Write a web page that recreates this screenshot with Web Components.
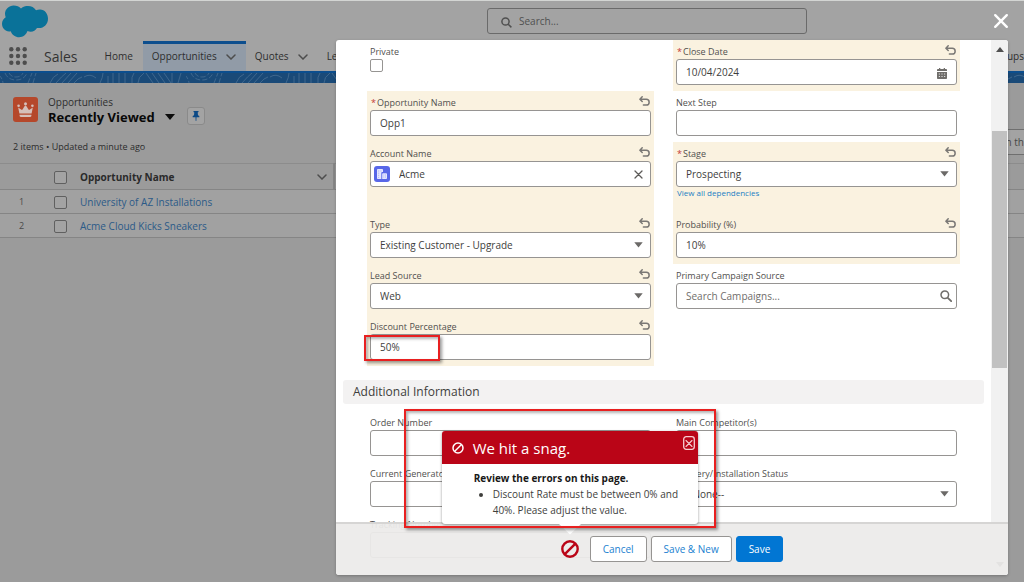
<!DOCTYPE html>
<html lang="en">
<head>
<meta charset="utf-8">
<title>Opportunities | Salesforce</title>
<style>
html, body { margin: 0; }
body { font: 10px/14px "Open Sans", "Noto Sans", sans-serif; color: #3e3e3c; background: #9b9b9b; overflow: hidden; }
</style>
</head>
<body>
<crm-app>
  <crm-header></crm-header>
  <crm-nav></crm-nav>
  <crm-list></crm-list>
  <crm-modal slot="overlay">
    <crm-column slot="main">
      <crm-field label="Private" kind="checkbox"></crm-field>
      <crm-field label="Opportunity Name" value="Opp1" required changed></crm-field>
      <crm-field label="Account Name" value="Acme" kind="lookup" changed tall></crm-field>
      <crm-field label="Type" value="Existing Customer - Upgrade" kind="select" changed></crm-field>
      <crm-field label="Lead Source" value="Web" kind="select" changed></crm-field>
      <crm-field label="Discount Percentage" value="50%" changed marked></crm-field>
    </crm-column>
    <crm-column slot="main">
      <crm-field label="Close Date" value="10/04/2024" kind="date" required changed></crm-field>
      <crm-field label="Next Step"></crm-field>
      <crm-field label="Stage" value="Prospecting" kind="select" required changed tall><a slot="help" href="#dependencies">View all dependencies</a></crm-field>
      <crm-field label="Probability (%)" value="10%" changed></crm-field>
      <crm-field label="Primary Campaign Source" placeholder="Search Campaigns..." kind="search"></crm-field>
    </crm-column>
    <crm-column slot="extra">
      <crm-field label="Order Number"></crm-field>
      <crm-field label="Current Generator(s)"></crm-field>
      <crm-field label="Tracking Number"></crm-field>
    </crm-column>
    <crm-column slot="extra">
      <crm-field label="Main Competitor(s)"></crm-field>
      <crm-field label="Delivery/Installation Status" value="--None--" kind="select"></crm-field>
    </crm-column>
    <crm-error slot="error" heading="We hit a snag.">
      <strong slot="title">Review the errors on this page.</strong>
      <li>Discount Rate must be between 0% and 40%. Please adjust the value.</li>
    </crm-error>
  </crm-modal>
</crm-app>

<script>
const define = (name, html, setup) => {
  const tpl = document.createElement('template');
  tpl.innerHTML = '<style>:host,*{box-sizing:border-box}button,input,select{font:inherit;color:inherit}svg{display:block;flex:none}</style>' + html;
  customElements.define(name, class extends HTMLElement {
    constructor() {
      super();
      this.attachShadow({ mode: 'open' }).append(tpl.content.cloneNode(true));
      if (setup) setup(this, this.shadowRoot);
    }
  });
};

define('crm-app', `
<style>
:host { display: grid; min-height: 100vh; }
.page, .overlay { grid-area: 1 / 1; min-width: 0; }
.page { overflow: hidden; }
.overlay { display: grid; grid-template-columns: 336px minmax(0, 1fr); padding: 40px 16px 7px 0; position: relative; }
::slotted(crm-modal) { grid-column: 2; }
.close { position: absolute; top: 13px; right: 15px; padding: 0; border: 0; background: none; }
</style>
<div class="page"><slot></slot></div>
<div class="overlay">
  <slot name="overlay"></slot>
  <button class="close" aria-label="Close"><svg width="16" height="16" viewBox="0 0 16 16" stroke="#fff" stroke-width="2.4" stroke-linecap="round"><path d="M2.200 2.200l11.600 11.600M13.800 2.200L2.200 13.800"/></svg></button>
</div>`);

define('crm-header', `
<style>
:host { display: flex; align-items: flex-start; height: 41px; background: #a3a3a3; border-top: 1px solid #d3d5d3; padding: 4px 0 0 2px; }
.search { display: flex; align-items: center; gap: 7px; width: 320px; height: 26px; margin: 3px 0 0 439px; padding: 0 13px; border: 1px solid #6a6a6a; border-radius: 3px; color: #505050; }
input { flex: 1; min-width: 0; border: 0; padding: 0; background: none; outline: 0; }
input::placeholder { color: #505050; opacity: 1; }
.search svg { margin-top: 2px; }
</style>
<svg width="46" height="33" viewBox="0 0 46 33" fill="#0a7299"><path d="M19 3.500C21 1.600 23.500 1 26 1c3.500 0 6.200 1.600 8 4.200C35.200 4.700 36.500 4.500 38 4.500c4.800 0 8 4.300 8 9.200 0 5.300-4 9.400-9 9.400-.7 0-1.300-.1-2-.2-1.400 2.400-3.600 3.800-6.300 3.800-1.200 0-2.200-.2-3.200-.7C24.200 29.500 21.200 32.200 17.200 32.200c-4 0-7.200-2.500-8.500-6-.5.100-1 .2-1.600.2C3 26.400 0 22.900 0 18.800c0-2.800 1.500-5.200 3.700-6.600C3.300 11.200 3 10 3 8.800 3 4 7 .4 11.600.4 14.700.4 17.400 1.400 19 3.500z"/></svg>
<label class="search"><svg width="11" height="11" viewBox="0 0 11 11" fill="none" stroke="#505050" stroke-width="1.500"><circle cx="4.500" cy="4.500" r="3.600"/><path d="M7.200 7.200L10.400 10.400"/></svg><input type="search" placeholder="Search..." aria-label="Search"></label>`);

define('crm-nav', `
<style>
:host { display: block; background: #a3a3a3; font-size: 10px; color: #2e2e2e; }
nav { display: flex; height: 32px; border-bottom: 2px solid #0c4e8e; white-space: nowrap; }
.apps { border: 0; background: none; padding: 6px 0 0 9px; display: block; align-self: flex-start; }
.name { font-size: 14px; line-height: 32px; margin: 0 18px 0 17px; color: #333; }
a { display: flex; align-items: center; gap: 9px; padding: 0 10px 4px 9px; color: inherit; text-decoration: none; border-top: 3px solid transparent; }
a svg { margin-top: 3px; }
a.on { border-top-color: #0c4e8e; background: #919ba7; }
a.last { margin-left: auto; padding-right: 0; }
.band { display: block; width: 100%; height: 10px; background: #1a4a78; }
</style>
<nav>
  <button class="apps" aria-label="App Launcher"><svg width="18" height="18" viewBox="0 0 18 18" fill="#4d4d4d"><circle cx="2.300" cy="2.300" r="2.200"/><circle cx="9" cy="2.300" r="2.200"/><circle cx="15.700" cy="2.300" r="2.200"/><circle cx="2.300" cy="9" r="2.200"/><circle cx="9" cy="9" r="2.200"/><circle cx="15.700" cy="9" r="2.200"/><circle cx="2.300" cy="15.700" r="2.200"/><circle cx="9" cy="15.700" r="2.200"/><circle cx="15.700" cy="15.700" r="2.200"/></svg></button>
  <span class="name">Sales</span>
  <a href="#home">Home</a>
  <a href="#opportunities" class="on">Opportunities<svg width="10" height="6" viewBox="0 0 10 6" fill="none" stroke="#4d4d4d" stroke-width="1.500" stroke-linecap="round"><path d="M1 1l4 4 4-4"/></svg></a>
  <a href="#quotes">Quotes<svg width="10" height="6" viewBox="0 0 10 6" fill="none" stroke="#4d4d4d" stroke-width="1.500" stroke-linecap="round"><path d="M1 1l4 4 4-4"/></svg></a>
  <a href="#leads">Leads</a>
  <a href="#groups" class="last">Groups</a>
</nav>
<svg class="band" aria-hidden="true"><defs><pattern id="t" width="186" height="10" patternUnits="userSpaceOnUse"><g fill="none" stroke="#3d668d" stroke-width="1"><path d="M-1 2q4 4 4 9M5 0q3 7 11 7t11-7M9 0q2 4 7 4t7-4M28 10l4-10M33 10l3-10" stroke-dasharray="5 2"/><path d="M50 10q3-7 8-9M56 10q6-7 10-10M62 10l9-10M68 10l9-10M74 10q4-5 8-6M84 4q6-4 12 1M100 10q3-6 3-10M108 10V3M113 10V0M119 10V0M125 10V0M132 10q-1-6 2-10M138 10q0-6 6-10M146 0l7 10M152 0l7 10M158 0l7 10M164 0l7 10M172 10V0M178 10l3-10"/></g></pattern></defs><rect width="100%" height="10" fill="url(#t)"/></svg>`);

define('crm-list', `
<style>
:host { display: block; background: #9b9b9b; }
header { display: grid; grid-template-columns: 25px auto auto minmax(0, 1fr); align-items: center; column-gap: 10px; padding: 12px 0 0 13px; }
.icon { width: 25px; height: 25px; border-radius: 3px; background: #b5482b; display: grid; place-items: center; align-self: start; margin-top: 2px; }
small { display: block; font-size: 10px; line-height: 14px; color: #2e2e2e; }
h1 { display: flex; align-items: center; gap: 10px; margin: 0; font-size: 13px; line-height: 16px; color: #080808; }
.pin { width: 18px; height: 18px; margin: 12px 0 0 2px; padding: 0; display: grid; place-items: center; border: 1px solid #8a8a8a; border-radius: 3px; background: #a3a3a3; }
.bar { display: flex; justify-content: space-between; height: 38px; padding-left: 13px; }
p { margin: 15px 0 0; font-size: 9px; line-height: 14px; color: #2b2b2b; }
.find { width: 120px; height: 26px; margin: 4px -56px 0 0; padding: 0 0 0 19px; border: 1px solid #6f6f6f; border-radius: 3px; background: #a3a3a3; }
.find::placeholder { color: #484848; opacity: 1; }
table { width: 100%; border-collapse: collapse; table-layout: fixed; border-top: 1px solid #8c8c8c; text-align: left; }
th, td { height: 24px; padding: 0; border-bottom: 1px solid #858585; background: #a1a1a1; }
th { height: 26px; background: #9b9b9b; font-size: 10px; color: #2a2a2a; }
td:first-child { text-align: center; font-size: 9px; color: #4a4a4a; padding-left: 2px; }
.n { width: 41px; } .c { width: 39px; } .o { width: 254px; }
th.name { border-right: 2px solid #868686; }
th.name div { display: flex; justify-content: space-between; align-items: center; padding-right: 6px; }
input[type=checkbox] { appearance: none; display: block; width: 13px; height: 13px; margin: 1px 0 0 13px; border: 1px solid #606060; border-radius: 2px; background: #a3a3a3; }
td a { color: #2b5a88; text-decoration: none; }
</style>
<header>
  <span class="icon"><svg width="17" height="16" viewBox="0 0 17 16" fill="#d5c0ba"><circle cx="1.600" cy="3.800" r="1.300"/><circle cx="8.500" cy="1.700" r="1.500"/><circle cx="15.400" cy="3.800" r="1.300"/><path d="M1.200 5.500l3.300 2.300c.4.200.8.100 1-.3L8 3.500h1l2.500 4c.2.400.6.500 1 .3l3.300-2.300-1.200 6H2.400zM2.600 12.800h11.800v1c0 .7-.5 1.200-1.200 1.200H3.800c-.7 0-1.200-.5-1.200-1.200z"/></svg></span>
  <div><small>Opportunities</small><h1>Recently Viewed<svg width="10" height="6" viewBox="0 0 10 6"><path d="M0 0h10L5 6z" fill="#0c0c0c"/></svg></h1></div>
  <button class="pin" aria-label="Pin this list"><svg width="8" height="10" viewBox="0 0 8 10" fill="#0d4a86"><path d="M1.500 0h5v1l-.8.500.3 2.800L7.300 5v1.200H4.500L4.300 10h-.6L3.500 6.200H.7V5L2 4.300l.3-2.800-.8-.5z"/></svg></button>
</header>
<div class="bar"><p>2 items • Updated a minute ago</p><input class="find" type="search" placeholder="Search this list..." aria-label="Search this list"></div>
<table>
  <colgroup><col class="n"><col class="c"><col class="o"><col></colgroup>
  <thead><tr><th></th><th><input type="checkbox" aria-label="Select all"></th><th class="name"><div>Opportunity Name<svg width="10" height="6" viewBox="0 0 10 6" fill="none" stroke="#4d4d4d" stroke-width="1.500" stroke-linecap="round"><path d="M1 1l4 4 4-4"/></svg></div></th><th></th></tr></thead>
  <tbody>
    <tr><td>1</td><td><input type="checkbox" aria-label="Select row 1"></td><td><a href="#r1">University of AZ Installations</a></td><td></td></tr>
    <tr><td>2</td><td><input type="checkbox" aria-label="Select row 2"></td><td><a href="#r2">Acme Cloud Kicks Sneakers</a></td><td></td></tr>
  </tbody>
</table>`);

define('crm-column', `
<style>:host { display: flex; flex-direction: column; min-width: 0; }</style><slot></slot>`);

const CARET = '<svg width="9" height="6" viewBox="0 0 9 6"><path d="M.3.3h8.400L4.500 5.600z" fill="#6b6967"/></svg>';
const ICONS = {
  select: CARET,
  lookup: '<svg width="9" height="9" viewBox="0 0 9 9" stroke="#5c5a58" stroke-width="1.300" stroke-linecap="round"><path d="M1 1l7 7M8 1L1 8"/></svg>',
  date: '<svg width="10" height="11" viewBox="0 0 10 11"><path d="M2 0h1.300v1h3.400V0H8v1h1.200c.4 0 .8.300.8.800V3H0V1.800C0 1.300.4 1 .8 1H2zM0 4h10v6.200c0 .4-.3.800-.8.800H.8c-.5 0-.8-.4-.8-.8z" fill="#706e6b"/><path d="M1.800 5.500h1.200v1H1.800zM4.400 5.500h1.200v1H4.400zM7 5.500h1.200v1H7zM1.800 8h1.200v1H1.800zM4.400 8h1.200v1H4.400zM7 8h1.200v1H7z" fill="#ddd"/></svg>',
  search: '<svg width="12" height="12" viewBox="0 0 12 12" fill="none" stroke="#706e6b"><circle cx="4.800" cy="4.800" r="3.800" stroke-width="1.500"/><path d="M7.800 7.800L11.200 11.200" stroke-width="1.800" stroke-linecap="round"/></svg>'
};

define('crm-field', `
<style>
:host { display: block; height: 51px; padding: 0 3px; }
:host([tall]) { height: 71px; }
:host([changed]) { background: #faf2e0; }
.top { display: flex; justify-content: space-between; align-items: center; height: 19px; padding-top: 4px; }
label { font-size: 9px; line-height: 12px; color: #51504e; white-space: nowrap; }
abbr { color: #c23934; text-decoration: none; margin: 0 1px; }
.undo { padding: 0; margin: 0 1px 4px 0; border: 0; background: none; }
.box { position: relative; display: flex; align-items: center; height: 26px; border: 1px solid #969492; border-radius: 3px; background: #fff; }
.box > input, select { appearance: none; flex: 1; min-width: 0; align-self: stretch; border: 0; margin: 0; padding: 0 9px 1px; background: none; outline: 0; color: #3e3e3c; }
input::placeholder { color: #706e6b; opacity: 1; }
.end { display: flex; justify-content: center; width: 23px; }
:host([kind=date]) .end { width: 28px; padding-top: 2px; }
:host([kind=search]) .end { width: 21px; }
.end:empty { display: none; }
.entity { display: grid; place-items: center; width: 16px; height: 16px; margin-left: 3px; border-radius: 3px; background: #5867e8; }
.check { appearance: none; display: block; width: 13px; height: 13px; margin: 0; border: 1px solid #969492; border-radius: 2px; background: #fff; }
.mark { position: absolute; left: -7px; top: 0; width: 76px; height: 26px; border: 2px solid #e82020; box-shadow: 2px 2px 3px rgba(0,0,0,.4), inset 2px 2px 3px rgba(0,0,0,.3); pointer-events: none; }
::slotted(a) { display: block; font-size: 8px; line-height: 12px; color: #1b7fc4; text-decoration: none; padding-left: 1px; }
</style>
<div class="top"><label for="f"></label></div>
<slot name="help"></slot>`, (host, root) => {
  const kind = host.getAttribute('kind') || 'text';
  const value = host.getAttribute('value') || '';
  const label = root.querySelector('label');
  label.textContent = host.getAttribute('label');
  if (host.hasAttribute('required')) label.insertAdjacentHTML('afterbegin', '<abbr title="required">*</abbr>');
  if (host.hasAttribute('changed')) label.insertAdjacentHTML('afterend', '<button class="undo" aria-label="Undo"><svg width="11" height="10" viewBox="0 0 11 10" fill="none" stroke="#7a7875" stroke-width="1.500" stroke-linecap="round" stroke-linejoin="round"><path d="M3.200.8L.9 3.200l2.300 2.300M1 3.200h6.200a2.900 2.900 0 0 1 0 5.900H4.400"/></svg></button>');
  const top = root.querySelector('.top');
  if (kind === 'checkbox') {
    top.insertAdjacentHTML('afterend', '<input id="f" class="check" type="checkbox">');
    return;
  }
  const control = kind === 'select'
    ? `<select id="f"><option>${value}</option></select>`
    : `<input id="f" type="text" value="${value}" placeholder="${host.getAttribute('placeholder') || ''}">`;
  const entity = kind === 'lookup' ? '<span class="entity"><svg width="10" height="10" viewBox="0 0 10 10"><path d="M0 1c0-.5.4-1 1-1h4c.6 0 1 .5 1 1v2H5.500c-.8 0-1.200.6-1.200 1.200V10H1c-.6 0-1-.4-1-1zM5.200 5c0-.5.3-.8.8-.8h3.200c.5 0 .8.300.8.800v4.200c0 .5-.3.8-.8.8H5.200z" fill="#e4e6ff"/><path d="M1.300 2h.8M3.600 2h.8M1.300 4.200h.8M1.300 6.300h.8M1.300 8.400h.8M6.500 6h.7M8.200 6h.7M6.500 8h.7M8.200 8h.7" stroke="#8d97ef" stroke-width=".8"/></svg></span>' : '';
  const mark = host.hasAttribute('marked') ? '<span class="mark"></span>' : '';
  top.insertAdjacentHTML('afterend', `<div class="box">${entity}${control}<span class="end">${ICONS[kind] || ''}</span>${mark}</div>`);
});

define('crm-modal', `
<style>
:host { display: grid; grid-template: minmax(0, 1fr) / minmax(0, 1fr); min-width: 0; border-radius: 3px; background: #fff; box-shadow: 0 1px 3px rgba(0,0,0,.25); position: relative; }
.body { grid-area: 1 / 1; display: grid; grid-template-columns: minmax(0, 1fr) 17px; overflow: hidden; border-radius: 3px; contain: size; }
.cols { display: grid; grid-template-columns: 1fr 1fr; column-gap: 19px; padding: 0 31px; }
h2 { margin: 14px 7px 7px; padding: 0 10px; height: 24px; border-radius: 3px; background: #f3f2f2; font-size: 12px; line-height: 24px; font-weight: 400; color: #3e3e3c; }
.scroll { display: grid; grid-template-rows: 91px 237px 1fr; background: #f1f1f1; justify-items: center; }
.scroll i { width: 15px; background: #c1c1c1; }
.scroll svg { margin-top: 7px; }
.scroll svg:last-child { align-self: end; margin-bottom: 8px; }
footer { grid-area: 1 / 1; align-self: end; position: relative; display: flex; justify-content: center; align-items: center; gap: 4px; height: 53px; border-top: 2px solid #d6d5d4; border-radius: 0 0 3px 3px; background: rgba(236,235,234,.94); padding-bottom: 1px; }
.error { position: relative; display: flex; margin-right: 7px; }
button { height: 26px; padding: 0 12px 1px; border: 1px solid #969492; border-radius: 3px; background: #fff; color: #1b7fd0; white-space: nowrap; }
.brand { background: #0176d3; border-color: #0176d3; color: #fff; }
</style>
<div class="body">
  <div>
    <div class="cols"><slot name="main"></slot></div>
    <h2>Additional Information</h2>
    <div class="cols"><slot name="extra"></slot></div>
  </div>
  <div class="scroll" aria-hidden="true"><svg width="8" height="5" viewBox="0 0 8 5"><path d="M0 5h8L4 0z" fill="#505050"/></svg><i></i><svg width="8" height="5" viewBox="0 0 8 5"><path d="M0 0h8L4 5z" fill="#505050"/></svg></div>
</div>
<footer>
  <div class="error"><svg width="18" height="18" viewBox="0 0 18 18" fill="none" stroke="#ba0517" stroke-width="2.400"><circle cx="9" cy="9" r="7.700"/><path d="M14.400 3.600L3.600 14.400"/></svg><slot name="error"></slot></div>
  <button>Cancel</button><button>Save &amp; New</button><button class="brand">Save</button>
</footer>`);

define('crm-error', `
<style>
:host { position: absolute; left: 50%; bottom: 34px; width: 256px; margin-left: -128px; border-radius: 3px; background: #fff; box-shadow: 0 1px 3px rgba(0,0,0,.4); }
header { display: flex; align-items: center; gap: 9px; height: 33px; padding: 0 3px 0 10px; border-radius: 3px 3px 0 0; background: #ba0517; color: #fff; }
h3 { margin: 0; flex: 1; font-size: 15px; line-height: 20px; font-weight: 400; }
.x { align-self: flex-start; margin-top: 5px; padding: 0; border: 0; background: none; }
.text { padding: 6px 16px 6px 32px; }
.text ::slotted(strong) { display: block; line-height: 16px; color: #181818; }
ul { margin: 0; padding: 0 0 0 19px; line-height: 16px; }
.nub { position: absolute; left: 50%; top: 100%; margin-left: -11px; }
.mark { position: absolute; inset: -22px -18px -4px -38px; border: 2px solid #e82020; box-shadow: 2px 2px 3px rgba(0,0,0,.4), inset 2px 2px 3px rgba(0,0,0,.3); pointer-events: none; }
</style>
<header><svg width="12" height="12" viewBox="0 0 12 12" fill="none" stroke="#fff" stroke-width="1.500"><circle cx="6" cy="6" r="5"/><path d="M9.500 2.500l-7 7"/></svg><h3></h3>
<button class="x" aria-label="Close error"><svg width="12" height="14" viewBox="0 0 12 14" fill="none" stroke="#f6cdd1"><rect x=".7" y=".7" width="10.600" height="12.600" rx="2.500" stroke-width="1.300"/><path d="M3 4.500l6 6M9 4.500l-6 6" stroke-width="1.100" stroke-linecap="round"/></svg></button></header>
<div class="text"><slot name="title"></slot><ul><slot></slot></ul></div>
<svg class="nub" width="22" height="11" viewBox="0 0 22 11"><path d="M0 0h22L11 10.500z" fill="#fff"/></svg>
<span class="mark"></span>`, (host, root) => {
  root.querySelector('h3').textContent = host.getAttribute('heading');
});
</script>
</body>
</html>
